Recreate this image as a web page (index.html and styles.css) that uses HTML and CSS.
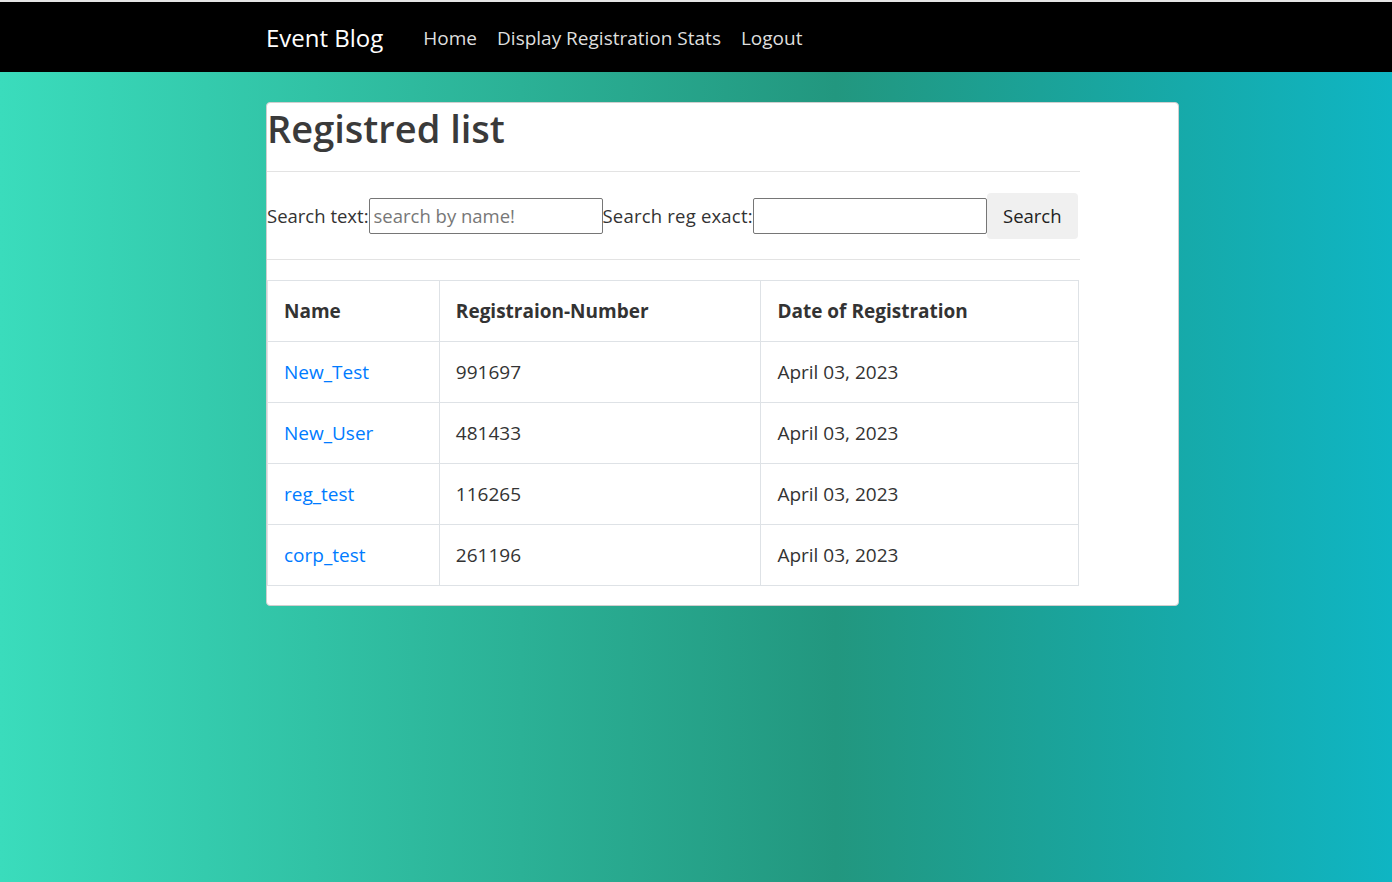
FILE: index.html
```html
<!DOCTYPE html>
<html lang="en">
<head>
<meta charset="utf-8">
<title>Event Blog</title>
<link rel="stylesheet" href="styles.css">
</head>
<body>
<nav class="topnav">
  <a class="brand" href="#">Event Blog</a>
  <ul class="navlinks">
    <li><a href="#">Home</a></li>
    <li><a href="#">Display Registration Stats</a></li>
    <li><a href="#">Logout</a></li>
  </ul>
</nav>
<main class="page">
  <section class="card">
    <div class="content">
      <h1 class="title">Registred list</h1>
      <hr class="rule">
      <form class="search">
        <label class="lbl" for="q">Search text:</label><input class="field" id="q" type="text" placeholder="search by name!"><label class="lbl lbl-wide" for="r">Search reg exact:</label><input class="field" id="r" type="text"><button class="btn" type="button">Search</button>
      </form>
      <hr class="rule">
      <table class="grid">
        <colgroup><col class="c1"><col class="c2"><col class="c3"></colgroup>
        <thead>
          <tr><th>Name</th><th>Registraion-Number</th><th>Date of Registration</th></tr>
        </thead>
        <tbody>
          <tr><td><a href="#">New_Test</a></td><td>991697</td><td>April 03, 2023</td></tr>
          <tr><td><a href="#">New_User</a></td><td>481433</td><td>April 03, 2023</td></tr>
          <tr><td><a href="#">reg_test</a></td><td>116265</td><td>April 03, 2023</td></tr>
          <tr><td><a href="#">corp_test</a></td><td>261196</td><td>April 03, 2023</td></tr>
        </tbody>
      </table>
    </div>
  </section>
</main>
</body>
</html>
```
FILE: styles.css
```css
* { box-sizing: border-box; }
html, body { margin: 0; padding: 0; }
body {
  min-height: 882px;
  font-family: "Open Sans", "Noto Sans", sans-serif;
  font-size: 18px;
  color: #333;
  background: linear-gradient(90deg, #3adcbc 0%, #22977f 60%, #0fb5c3 100%);
  border-top: 2px solid #e4e4e4;
}
.topnav {
  height: 70px;
  background: #000;
  display: flex;
  align-items: center;
  padding-left: 266px;
}
.brand {
  color: #fff;
  font-size: 24px;
  text-decoration: none;
  margin-right: 40px;
}
.navlinks {
  list-style: none;
  margin: 0;
  padding: 1px 0 0 0;
  display: flex;
  gap: 20px;
}
.navlinks a {
  color: rgba(255,255,255,.88);
  text-decoration: none;
  font-size: 19px;
}
.page { padding-top: 30px; padding-left: 266px; }
.card {
  width: 913px;
  height: 504px;
  background: #fff;
  border: 1px solid #cfcfcf;
  border-radius: 4px;
}
.content { width: 813px; }
.title {
  margin: 0;
  padding: 1px 0 0 0;
  font-size: 38px;
  font-weight: 600;
  line-height: 48px;
  color: #3a3a3a;
  height: 68px;
}
.rule {
  margin: 0;
  border: 0;
  border-top: 1px solid #e3e3e3;
  height: 0;
}
.search {
  display: flex;
  align-items: center;
  padding: 20px 0;
  height: 87px;
}
.lbl { font-size: 18.5px; color: #333; }
.lbl-wide { letter-spacing: 0.2px; }
.field {
  width: 234px;
  height: 36px;
  border: 1px solid #767676;
  border-radius: 2px;
  font-family: inherit;
  font-size: 18.5px;
  padding: 0 4px;
  color: #333;
}
.field::placeholder { color: #777; }
.btn {
  width: 91px;
  height: 46px;
  border: 0;
  border-radius: 4px;
  background: #f0f0f0;
  font-family: inherit;
  font-size: 18.5px;
  color: #222;
}
.grid {
  margin-top: 20px;
  width: 812px;
  border-collapse: collapse;
}
.c1 { width: 172px; }
.c2 { width: 322px; }
.c3 { width: 318px; }
.grid th, .grid td {
  border: 1px solid #dee2e6;
  height: 61px;
  padding: 0 16px;
  text-align: left;
  font-size: 19px;
}
.grid th { font-weight: 700; color: #333; }
.grid td { color: #333; }
.grid a { color: #007bff; text-decoration: none; }
```
